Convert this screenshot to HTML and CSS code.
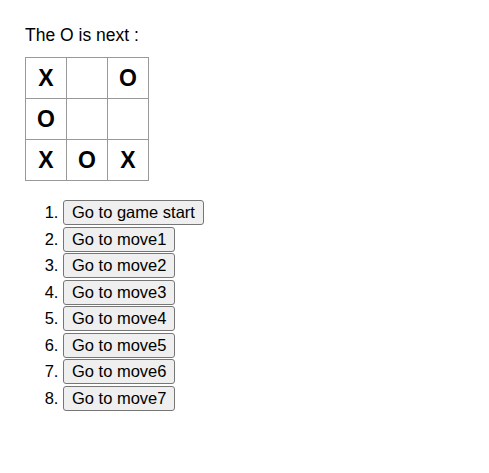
FILE: index.html
```html
<!DOCTYPE html>
<html lang="en">
<head>
    <meta charset="UTF-8">
    <title>Tic Tac Toe</title>
    <link rel="stylesheet" href="styles.css">
</head>
<body>
    <div class="game">
        <div class="status">The O is next :</div>
        <div class="board">
            <div class="board-row">
                <button class="square">X</button>
                <button class="square"></button>
                <button class="square">O</button>
            </div>
            <div class="board-row">
                <button class="square">O</button>
                <button class="square"></button>
                <button class="square"></button>
            </div>
            <div class="board-row">
                <button class="square">X</button>
                <button class="square">O</button>
                <button class="square">X</button>
            </div>
        </div>
        <ol class="moves">
            <li><button class="jump">Go to game start</button></li>
            <li><button class="jump">Go to move1</button></li>
            <li><button class="jump">Go to move2</button></li>
            <li><button class="jump">Go to move3</button></li>
            <li><button class="jump">Go to move4</button></li>
            <li><button class="jump">Go to move5</button></li>
            <li><button class="jump">Go to move6</button></li>
            <li><button class="jump">Go to move7</button></li>
        </ol>
    </div>
</body>
</html>
```

FILE: styles.css
```css
body {
    font-family: "Liberation Sans", Arial, sans-serif;
    font-size: 16.5px;
    margin: 0;
    color: #000;
}
.game {
    padding: 25px 0 0 25px;
}
.status {
    font-size: 17.5px;
    line-height: 20px;
    margin-bottom: 12px;
}
.board {
    width: 130px;
}
.board-row {
    display: flex;
}
.board-row + .board-row {
    margin-top: -1px;
}
.square {
    width: 42px;
    height: 42px;
    margin-right: -1px;
    padding: 0;
    background: #fff;
    border: 1px solid #999;
    font-family: "Liberation Sans", Arial, sans-serif;
    font-size: 23px;
    font-weight: bold;
    line-height: 40px;
    text-align: center;
    color: #000;
}
.moves {
    margin: 19px 0 0;
    padding-left: 38px;
}
.moves li {
    height: 26.5px;
}
.jump {
    font-family: "Liberation Sans", Arial, sans-serif;
    font-size: 16.5px;
    padding: 2px 8px;
    background: #efefef;
    border: 1px solid #767676;
    border-radius: 3px;
    color: #000;
}
```
